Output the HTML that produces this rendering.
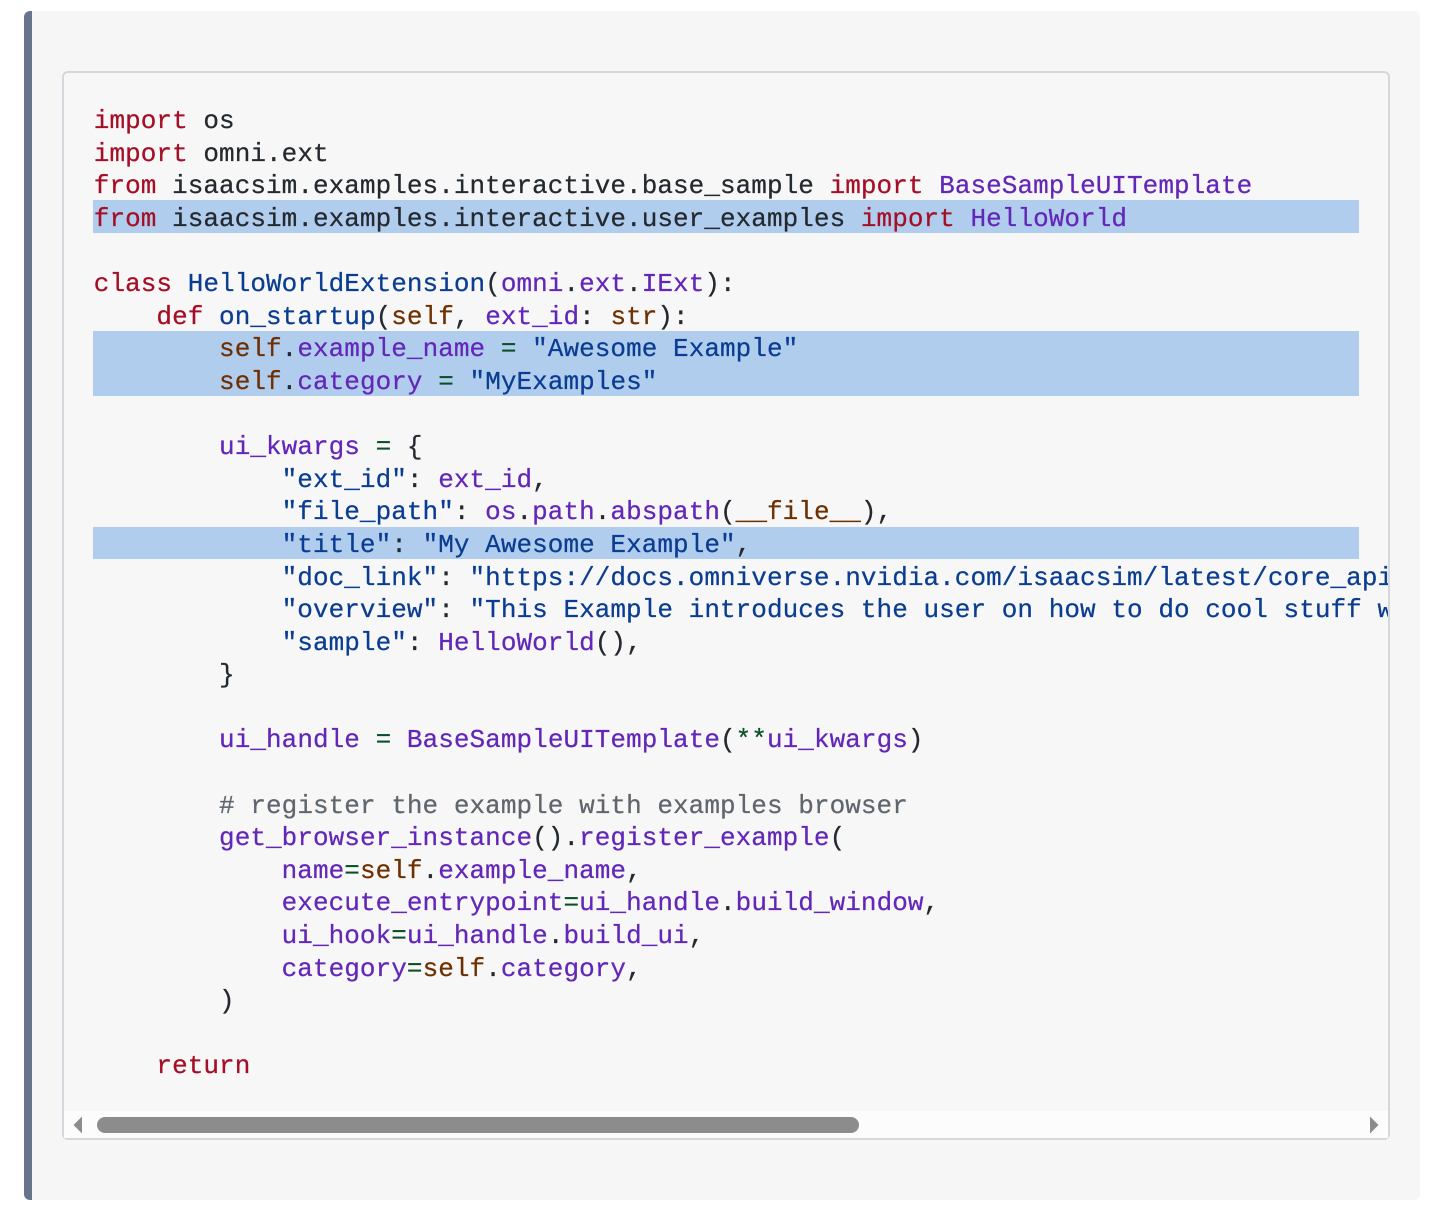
<!DOCTYPE html>
<html lang="en">
<head>
<meta charset="utf-8">
<title>Code</title>
<style>
html,body{margin:0;padding:0;background:#fff;width:1440px;height:1218px;overflow:hidden}
#adm{position:absolute;left:24px;top:11px;width:1396px;height:1189px;background:#f6f6f6;border-radius:6px;overflow:hidden}
#bar{position:absolute;left:0;top:0;width:8px;height:1189px;background:#67748a}
#box{position:absolute;left:62px;top:71px;width:1324px;height:1065px;border:2px solid #d4d7dc;border-radius:6px;background:#f7f7f7;overflow:hidden}
.hl{position:absolute;left:93px;width:1266px;background:#b1cdee}
pre{position:absolute;left:93.8px;top:105.2px;margin:0;width:1294.2px;height:1000px;overflow:hidden;font-family:"Liberation Mono",monospace;font-size:26px;letter-spacing:.052px;line-height:32.6px;color:#24292f;-webkit-text-stroke:.25px currentColor}
.k{color:#a40e26}.b{color:#0a3d91}.p{color:#6327b8}.s{color:#6e3000}.o{color:#0b4f27}.c{color:#60666d}
#track{position:absolute;left:64px;top:1111px;width:1324px;height:27px;background:#fcfcfc}
#thumb{position:absolute;left:97px;top:1117px;width:762px;height:16px;border-radius:8px;background:#8c8c8c}
svg{position:absolute}
</style>
</head>
<body>
<div id="adm"><div id="bar"></div></div>
<div id="box"></div>
<div class="hl" style="top:200px;height:33px"></div>
<div class="hl" style="top:331px;height:65px"></div>
<div class="hl" style="top:527px;height:32px"></div>
<pre><span class="k">import</span> os
<span class="k">import</span> omni.ext
<span class="k">from</span> isaacsim.examples.interactive.base_sample <span class="k">import</span> <span class="p">BaseSampleUITemplate</span>
<span class="k">from</span> isaacsim.examples.interactive.user_examples <span class="k">import</span> <span class="p">HelloWorld</span>

<span class="k">class</span> <span class="b">HelloWorldExtension</span>(<span class="p">omni</span>.<span class="p">ext</span>.<span class="p">IExt</span>):
    <span class="k">def</span> <span class="b">on_startup</span>(<span class="s">self</span>, <span class="p">ext_id</span>: <span class="s">str</span>):
        <span class="s">self</span>.<span class="p">example_name</span> <span class="o">=</span> <span class="b">"Awesome Example"</span>
        <span class="s">self</span>.<span class="p">category</span> <span class="o">=</span> <span class="b">"MyExamples"</span>

        <span class="p">ui_kwargs</span> <span class="o">=</span> {
            <span class="b">"ext_id"</span>: <span class="p">ext_id</span>,
            <span class="b">"file_path"</span>: <span class="p">os</span>.<span class="p">path</span>.<span class="p">abspath</span>(<span class="s">__file__</span>),
            <span class="b">"title"</span>: <span class="b">"My Awesome Example"</span>,
            <span class="b">"doc_link"</span>: <span class="b">"https://docs.omniverse.nvidia.com/isaacsim/latest/core_api_tutorials/tutorial_core_hello_world.html"</span>,
            <span class="b">"overview"</span>: <span class="b">"This Example introduces the user on how to do cool stuff with Isaac Sim through scripting"</span>,
            <span class="b">"sample"</span>: <span class="p">HelloWorld</span>(),
        }

        <span class="p">ui_handle</span> <span class="o">=</span> <span class="p">BaseSampleUITemplate</span>(<span class="o">**</span><span class="p">ui_kwargs</span>)

        <span class="c"># register the example with examples browser</span>
        <span class="p">get_browser_instance</span>().<span class="p">register_example</span>(
            <span class="p">name</span><span class="o">=</span><span class="s">self</span>.<span class="p">example_name</span>,
            <span class="p">execute_entrypoint</span><span class="o">=</span><span class="p">ui_handle</span>.<span class="p">build_window</span>,
            <span class="p">ui_hook</span><span class="o">=</span><span class="p">ui_handle</span>.<span class="p">build_ui</span>,
            <span class="p">category</span><span class="o">=</span><span class="s">self</span>.<span class="p">category</span>,
        )

    <span class="k">return</span></pre>
<div id="track"></div>
<div id="thumb"></div>
<svg style="left:73px;top:1116px" width="10" height="18" viewBox="0 0 10 18"><path d="M9 0.5V17.5L0.5 9Z" fill="#8c8c8c"/></svg>
<svg style="left:1369px;top:1116px" width="10" height="18" viewBox="0 0 10 18"><path d="M1 0.5V17.5L9.5 9Z" fill="#8c8c8c"/></svg>
</body>
</html>
